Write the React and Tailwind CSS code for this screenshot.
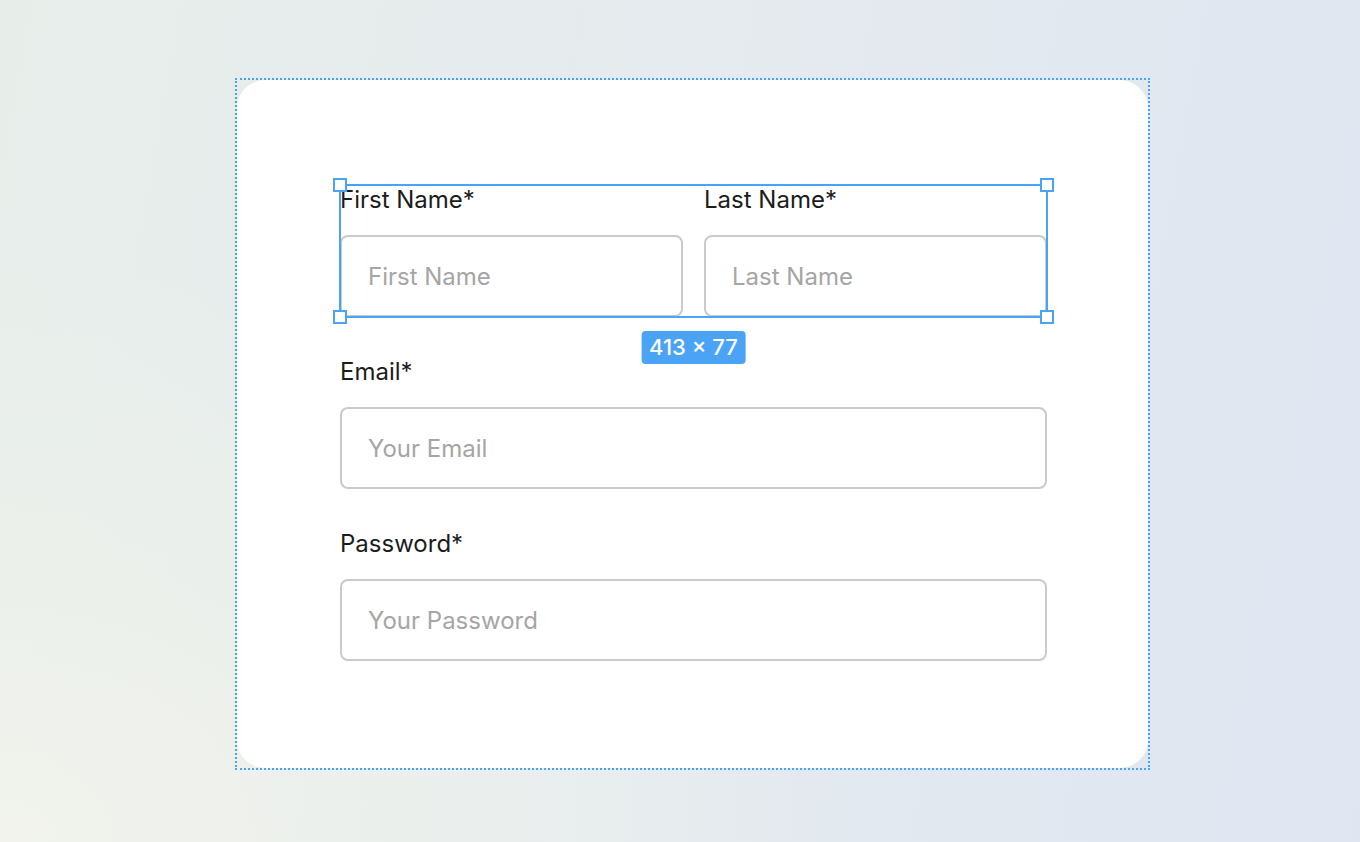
import React from 'react'

const font = { fontFamily: 'Inter, "Noto Sans", sans-serif' }

function Field({ label, placeholder, type = 'text' }) {
  return (
    <div className="flex flex-col">
      <label className="mb-[21px] text-[24px] leading-[29px] text-[#1c1c1c]">{label}</label>
      <input
        type={type}
        placeholder={placeholder}
        className="h-[82px] w-full rounded-[8px] border-2 border-[#cacaca] bg-white px-[26px] text-[24px] text-[#1c1c1c] outline-none placeholder:text-[#a5a5a5]"
      />
    </div>
  )
}

function Handle({ className }) {
  return <div className={`absolute h-[14px] w-[14px] border-2 border-[#4aa3f5] bg-white ${className}`} />
}

export default function App() {
  return (
    <div
      style={font}
      className="min-h-screen w-full bg-[radial-gradient(ellipse_60%_70%_at_0%_100%,#f1f3ec_0%,rgba(241,243,236,0)_100%),linear-gradient(100deg,#e7eeea_0%,#e5ebee_45%,#dfe6f2_100%)] pl-[237px] pt-[80px]"
    >
      <div className="relative h-[688px] w-[911px]">
        <div className="pointer-events-none absolute -inset-[2px] border-2 border-dotted border-[#4aa3f5]" />
        <div className="relative h-full w-full rounded-[28px] bg-white pl-[103px] pr-[101px] pt-[105px]">
          <div className="flex flex-col gap-[40px]">
            <div className="relative">
              <div className="grid grid-cols-2 gap-[21px]">
                <Field label="First Name*" placeholder="First Name" />
                <Field label="Last Name*" placeholder="Last Name" />
              </div>
              <div className="pointer-events-none absolute -left-[1px] -top-[1px] -bottom-[1px] -right-[1px] border-2 border-[#4aa3f5]">
                <Handle className="-left-[8px] -top-[8px]" />
                <Handle className="-right-[8px] -top-[8px]" />
                <Handle className="-left-[8px] -bottom-[8px]" />
                <Handle className="-right-[8px] -bottom-[8px]" />
                <div className="absolute left-1/2 top-full mt-[15px] -translate-x-1/2 whitespace-nowrap rounded-[4px] bg-[#4aa3f5] px-[8px] py-[2px] text-[22px] leading-[29px] font-medium text-white">
                  413 × 77
                </div>
              </div>
            </div>
            <Field label="Email*" placeholder="Your Email" type="email" />
            <Field label="Password*" placeholder="Your Password" type="password" />
          </div>
        </div>
      </div>
    </div>
  )
}
